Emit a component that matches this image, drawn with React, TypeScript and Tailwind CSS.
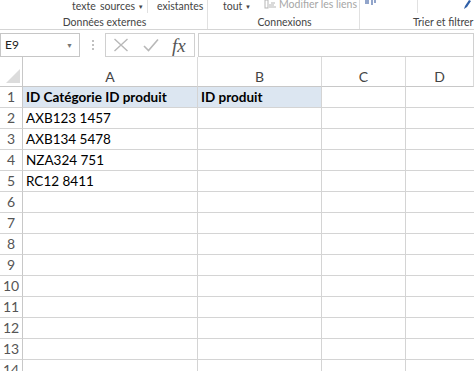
import React from "react";

const ROWS = 14;
const data: Record<number, [string, string]> = {
  1: ["ID Catégorie ID produit", "ID produit"],
  2: ["AXB123 1457", ""],
  3: ["AXB134 5478", ""],
  4: ["NZA324 751", ""],
  5: ["RC12 8411", ""],
};

export default function App() {
  const ui = { fontFamily: 'Lato, "Noto Sans", sans-serif' };
  const cell = { fontFamily: 'Lato, "Liberation Sans", sans-serif' };
  return (
    <div className="w-[474px] h-[371px] overflow-hidden bg-white relative select-none">
      {/* Ribbon */}
      <div className="h-[30px] border-b border-[#d5d5d5] flex text-[10.5px] text-[#444] bg-white whitespace-nowrap" style={ui}>
        <div className="w-[208px] flex flex-col border-r border-[#e1e1e1]">
          <div className="h-[14px] relative">
            <span className="absolute left-[72px] top-[-1px] leading-[14px]">texte</span>
            <span className="absolute left-[100px] top-[-1px] leading-[14px]">sources <span className="text-[6px] align-middle">▼</span></span>
            <span className="absolute left-[147px] top-0 h-[13px] w-px bg-[#e1e1e1]" />
            <span className="absolute left-[157px] top-[-1px] leading-[14px]">existantes</span>
          </div>
          <div className="h-[15px] flex items-center justify-center pl-[2px] leading-[14px]">Données externes</div>
        </div>
        <div className="w-[152px] flex flex-col border-r border-[#e1e1e1]">
          <div className="h-[14px] relative">
            <span className="absolute left-[15px] top-[-1px] leading-[14px]">tout <span className="text-[6px] align-middle">▼</span></span>
            <span className="absolute left-[56px] top-[-3px] leading-[14px] flex items-center text-[#a6a6a6]">
              <svg width="13" height="12" viewBox="0 0 13 12" className="mr-[2px]">
                <rect x="1" y="2" width="3" height="8" fill="none" stroke="#b5b5b5" strokeWidth="1" />
                <path d="M5 9h7M5 7h5M7 5h4" stroke="#b5b5b5" strokeWidth="1" />
              </svg>
              Modifier les liens
            </span>
          </div>
          <div className="h-[15px] flex items-center justify-center pl-[2px] leading-[14px]">Connexions</div>
        </div>
        <div className="flex-1 flex flex-col relative">
          <div className="h-[14px] relative">
            <svg width="14" height="6" viewBox="0 0 14 6" className="absolute left-[5px] top-0">
              <path d="M1 0v4M3 0v4M7 0v5M10 0v3" stroke="#4a6aa8" strokeWidth="1.2" />
            </svg>
            <span className="absolute left-[57px] top-0 h-[13px] w-px bg-[#e1e1e1]" />
            <svg width="10" height="10" viewBox="0 0 10 10" className="absolute left-[102px] top-0">
              <path d="M7 0L3 6L2 9L5 7L9 1Z" fill="#2f5fa7" />
            </svg>
          </div>
          <div className="h-[15px] flex items-center pl-[53px] leading-[14px]">Trier et filtrer</div>
        </div>
      </div>

      {/* Formula bar */}
      <div className="h-[30px] pt-[3px] flex items-start" style={ui}>
        <div className="w-[80px] h-[24px] border border-[#c6c6c6] flex items-center justify-between pl-[4px] pr-[6px]">
          <span className="text-[12px] text-[#222]">E9</span>
          <span className="text-[7px] text-[#777]">▼</span>
        </div>
        <div className="w-[25px] h-[24px] flex flex-col items-center justify-center gap-[2px]">
          <span className="w-[2px] h-[2px] bg-[#c0c0c0]" />
          <span className="w-[2px] h-[2px] bg-[#c0c0c0]" />
          <span className="w-[2px] h-[2px] bg-[#c0c0c0]" />
        </div>
        <div className="w-[90px] h-[24px] border border-[#d0d0d0] flex items-center">
          <svg width="16" height="14" viewBox="0 0 16 14" className="ml-[7px]">
            <path d="M1.5 1L14.5 13M14.5 1L1.5 13" stroke="#b8b8b8" strokeWidth="1.4" />
          </svg>
          <svg width="16" height="14" viewBox="0 0 16 14" className="ml-[14px]">
            <path d="M1 8L5.5 12.5L15 1.5" stroke="#b8b8b8" strokeWidth="1.6" fill="none" />
          </svg>
          <span className="ml-[13px] text-[19px] italic text-[#555] leading-none" style={{ fontFamily: '"Liberation Serif", serif' }}>fx</span>
        </div>
        <div className="flex-1 h-[24px] ml-[3px] border border-[#d0d0d0]" />
      </div>

      {/* Grid */}
      <div className="grid grid-cols-[23px_175px_124px_84px_1fr] mt-[-3px]" style={cell}>
        <div className="h-[30px] border-r border-b border-[#c8c8c8] relative bg-white">
          <svg width="14" height="14" viewBox="0 0 14 14" className="absolute left-[6px] top-[12px]">
            <path d="M14 0L14 14L0 14Z" fill="#dcdcdc" />
          </svg>
        </div>
        {["A", "B", "C", "D"].map((c) => (
          <div key={c} className="h-[30px] border-r border-b border-[#dadada] border-b-[#c8c8c8] flex items-center justify-center pt-[10px] text-[14px] text-[#444]">
            {c}
          </div>
        ))}
        {Array.from({ length: ROWS }, (_, i) => i + 1).map((r) => {
          const d = data[r] || ["", ""];
          const hl = r === 1;
          return (
            <React.Fragment key={r}>
              <div className="h-[21px] border-r border-b border-[#d4d4d4] border-r-[#c8c8c8] flex items-center justify-center text-[14px] text-[#555] leading-none">
                {r}
              </div>
              <div className={`h-[21px] border-r border-b border-[#d4d4d4] flex items-center pl-[3px] text-[13.5px] text-black whitespace-nowrap ${hl ? "bg-[#dce6f1] font-bold" : ""}`}>
                {d[0]}
              </div>
              <div className={`h-[21px] border-r border-b border-[#d4d4d4] flex items-center pl-[3px] text-[13.5px] text-black whitespace-nowrap ${hl ? "bg-[#dce6f1] font-bold" : ""}`}>
                {d[1]}
              </div>
              <div className="h-[21px] border-r border-b border-[#d4d4d4]" />
              <div className="h-[21px] border-b border-[#d4d4d4]" />
            </React.Fragment>
          );
        })}
      </div>
    </div>
  );
}
